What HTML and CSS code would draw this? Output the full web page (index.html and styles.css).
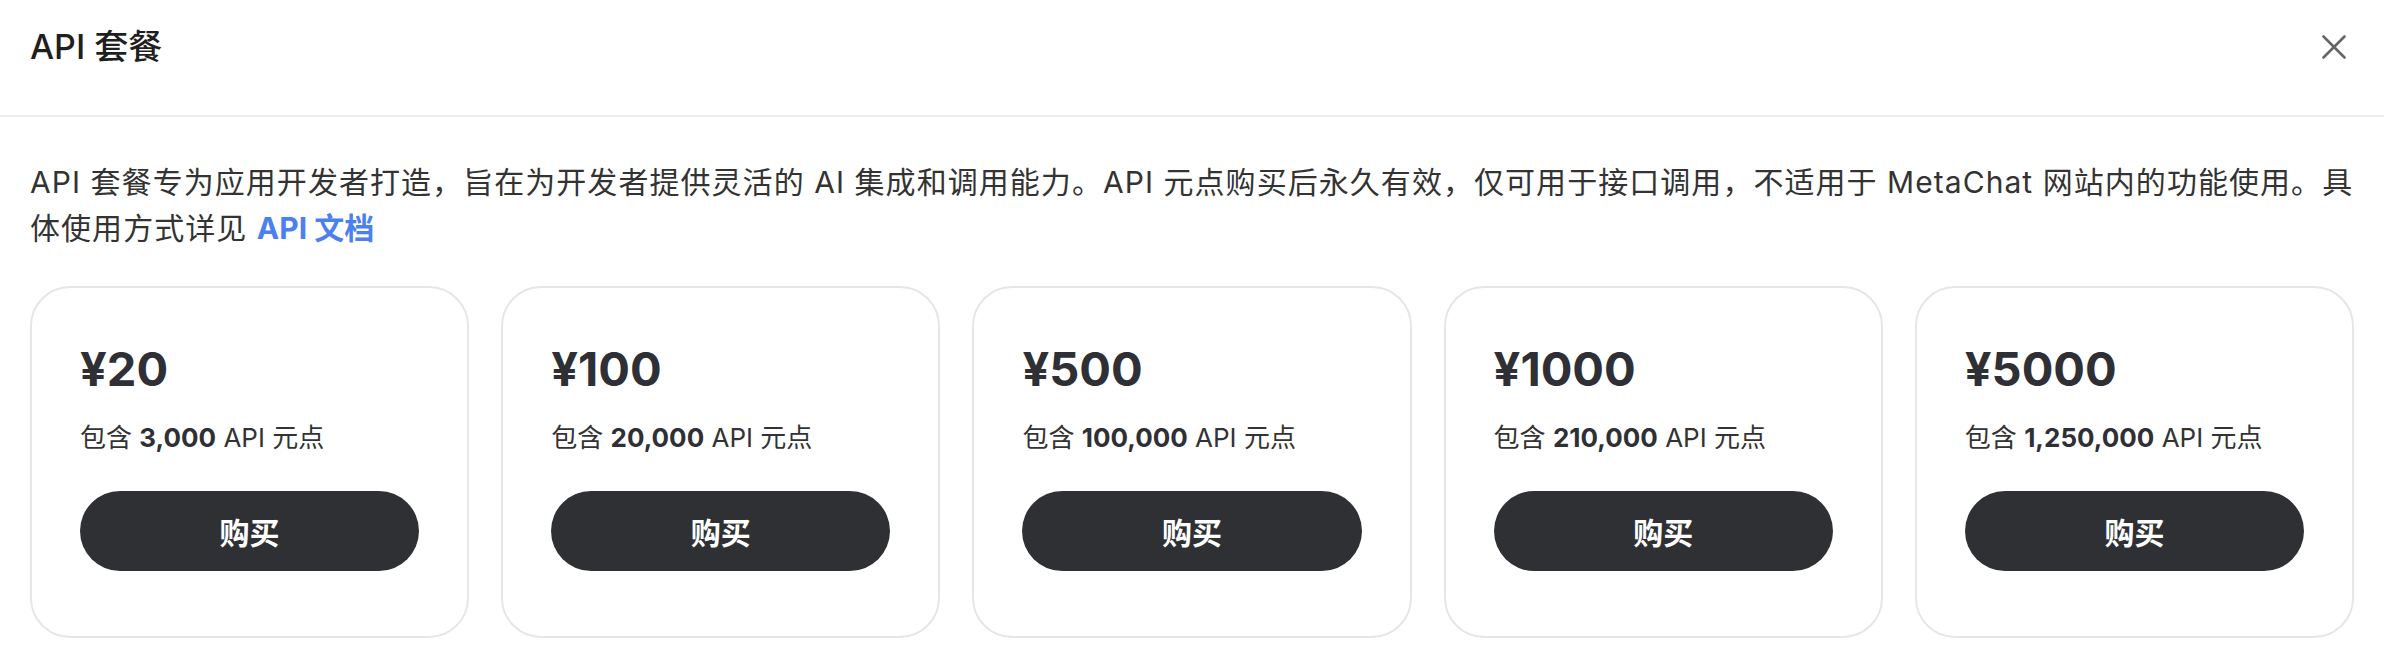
FILE: index.html
```html
<!DOCTYPE html>
<html lang="zh-CN">
<head>
    <meta charset="UTF-8">
    <meta name="viewport" content="width=device-width, initial-scale=1.0">
    <title>API 套餐</title>
    <link rel="stylesheet" href="styles.css">
</head>
<body>
    <div class="modal">
        <!-- Header -->
        <div class="modal-header">
            <h2 class="modal-title">API 套餐</h2>
            <button class="close-btn" aria-label="关闭">
                <svg width="24" height="24" viewBox="0 0 24 24" fill="none">
                    <path d="M1.5 1.5L22.5 22.5M22.5 1.5L1.5 22.5" stroke="#666666" stroke-width="2.6" stroke-linecap="round"/>
                </svg>
            </button>
        </div>

        <!-- Body -->
        <div class="modal-body">
            <p class="plan-desc">API 套餐专为应用开发者打造，旨在为开发者提供灵活的 AI 集成和调用能力。API 元点购买后永久有效，仅可用于接口调用，不适用于 MetaChat 网站内的功能使用。具体使用方式详见 <a href="#" class="doc-link">API 文档</a></p>

            <div class="plan-grid">
                <div class="plan-card">
                    <div class="plan-price">¥20</div>
                    <div class="plan-points">包含 <strong>3,000</strong> API 元点</div>
                    <button class="buy-btn">购买</button>
                </div>
                <div class="plan-card">
                    <div class="plan-price">¥100</div>
                    <div class="plan-points">包含 <strong>20,000</strong> API 元点</div>
                    <button class="buy-btn">购买</button>
                </div>
                <div class="plan-card">
                    <div class="plan-price">¥500</div>
                    <div class="plan-points">包含 <strong>100,000</strong> API 元点</div>
                    <button class="buy-btn">购买</button>
                </div>
                <div class="plan-card">
                    <div class="plan-price">¥1000</div>
                    <div class="plan-points">包含 <strong>210,000</strong> API 元点</div>
                    <button class="buy-btn">购买</button>
                </div>
                <div class="plan-card">
                    <div class="plan-price">¥5000</div>
                    <div class="plan-points">包含 <strong>1,250,000</strong> API 元点</div>
                    <button class="buy-btn">购买</button>
                </div>
            </div>
        </div>
    </div>
</body>
</html>
```

FILE: styles.css
```css
* {
    margin: 0;
    padding: 0;
    box-sizing: border-box;
}

body {
    font-family: Inter, 'Noto Sans CJK SC', sans-serif;
    background-color: #ffffff;
    color: #333333;
    overflow: hidden;
}

.modal {
    width: 100%;
}

.modal-header {
    height: 117px;
    padding: 24px 30px 0;
    display: flex;
    align-items: flex-start;
    justify-content: space-between;
    border-bottom: 2px solid #ededf0;
}

.modal-title {
    font-size: 34px;
    font-weight: 500;
    line-height: 46px;
    color: #1f1f1f;
}

.close-btn {
    width: 40px;
    height: 46px;
    border: none;
    background: none;
    cursor: pointer;
    display: flex;
    align-items: center;
    justify-content: center;
}

.modal-body {
    padding: 42px 30px 0;
}

.plan-desc {
    font-size: 30px;
    line-height: 46px;
    letter-spacing: 1.05px;
    color: #333333;
}

.doc-link {
    color: #4b80f1;
    font-weight: 700;
    letter-spacing: 0;
    text-decoration: none;
}

.plan-grid {
    display: grid;
    grid-template-columns: repeat(5, 1fr);
    gap: 32px;
    margin-top: 35px;
}

.plan-card {
    border: 2px solid #e6e6ea;
    border-radius: 40px;
    padding: 48px 48px 65px;
    display: flex;
    flex-direction: column;
}

.plan-price {
    font-size: 47px;
    font-weight: 700;
    line-height: 65px;
    color: #2f3035;
}

.plan-points {
    margin-top: 14px;
    font-size: 26px;
    line-height: 46px;
    white-space: nowrap;
    color: #333333;
}

.plan-points strong {
    font-weight: 700;
    color: #2f3035;
}

.buy-btn {
    margin-top: 30px;
    height: 80px;
    border: none;
    border-radius: 40px;
    background-color: #2f3034;
    color: #ffffff;
    font-family: inherit;
    font-size: 30px;
    font-weight: 700;
    cursor: pointer;
}
```
